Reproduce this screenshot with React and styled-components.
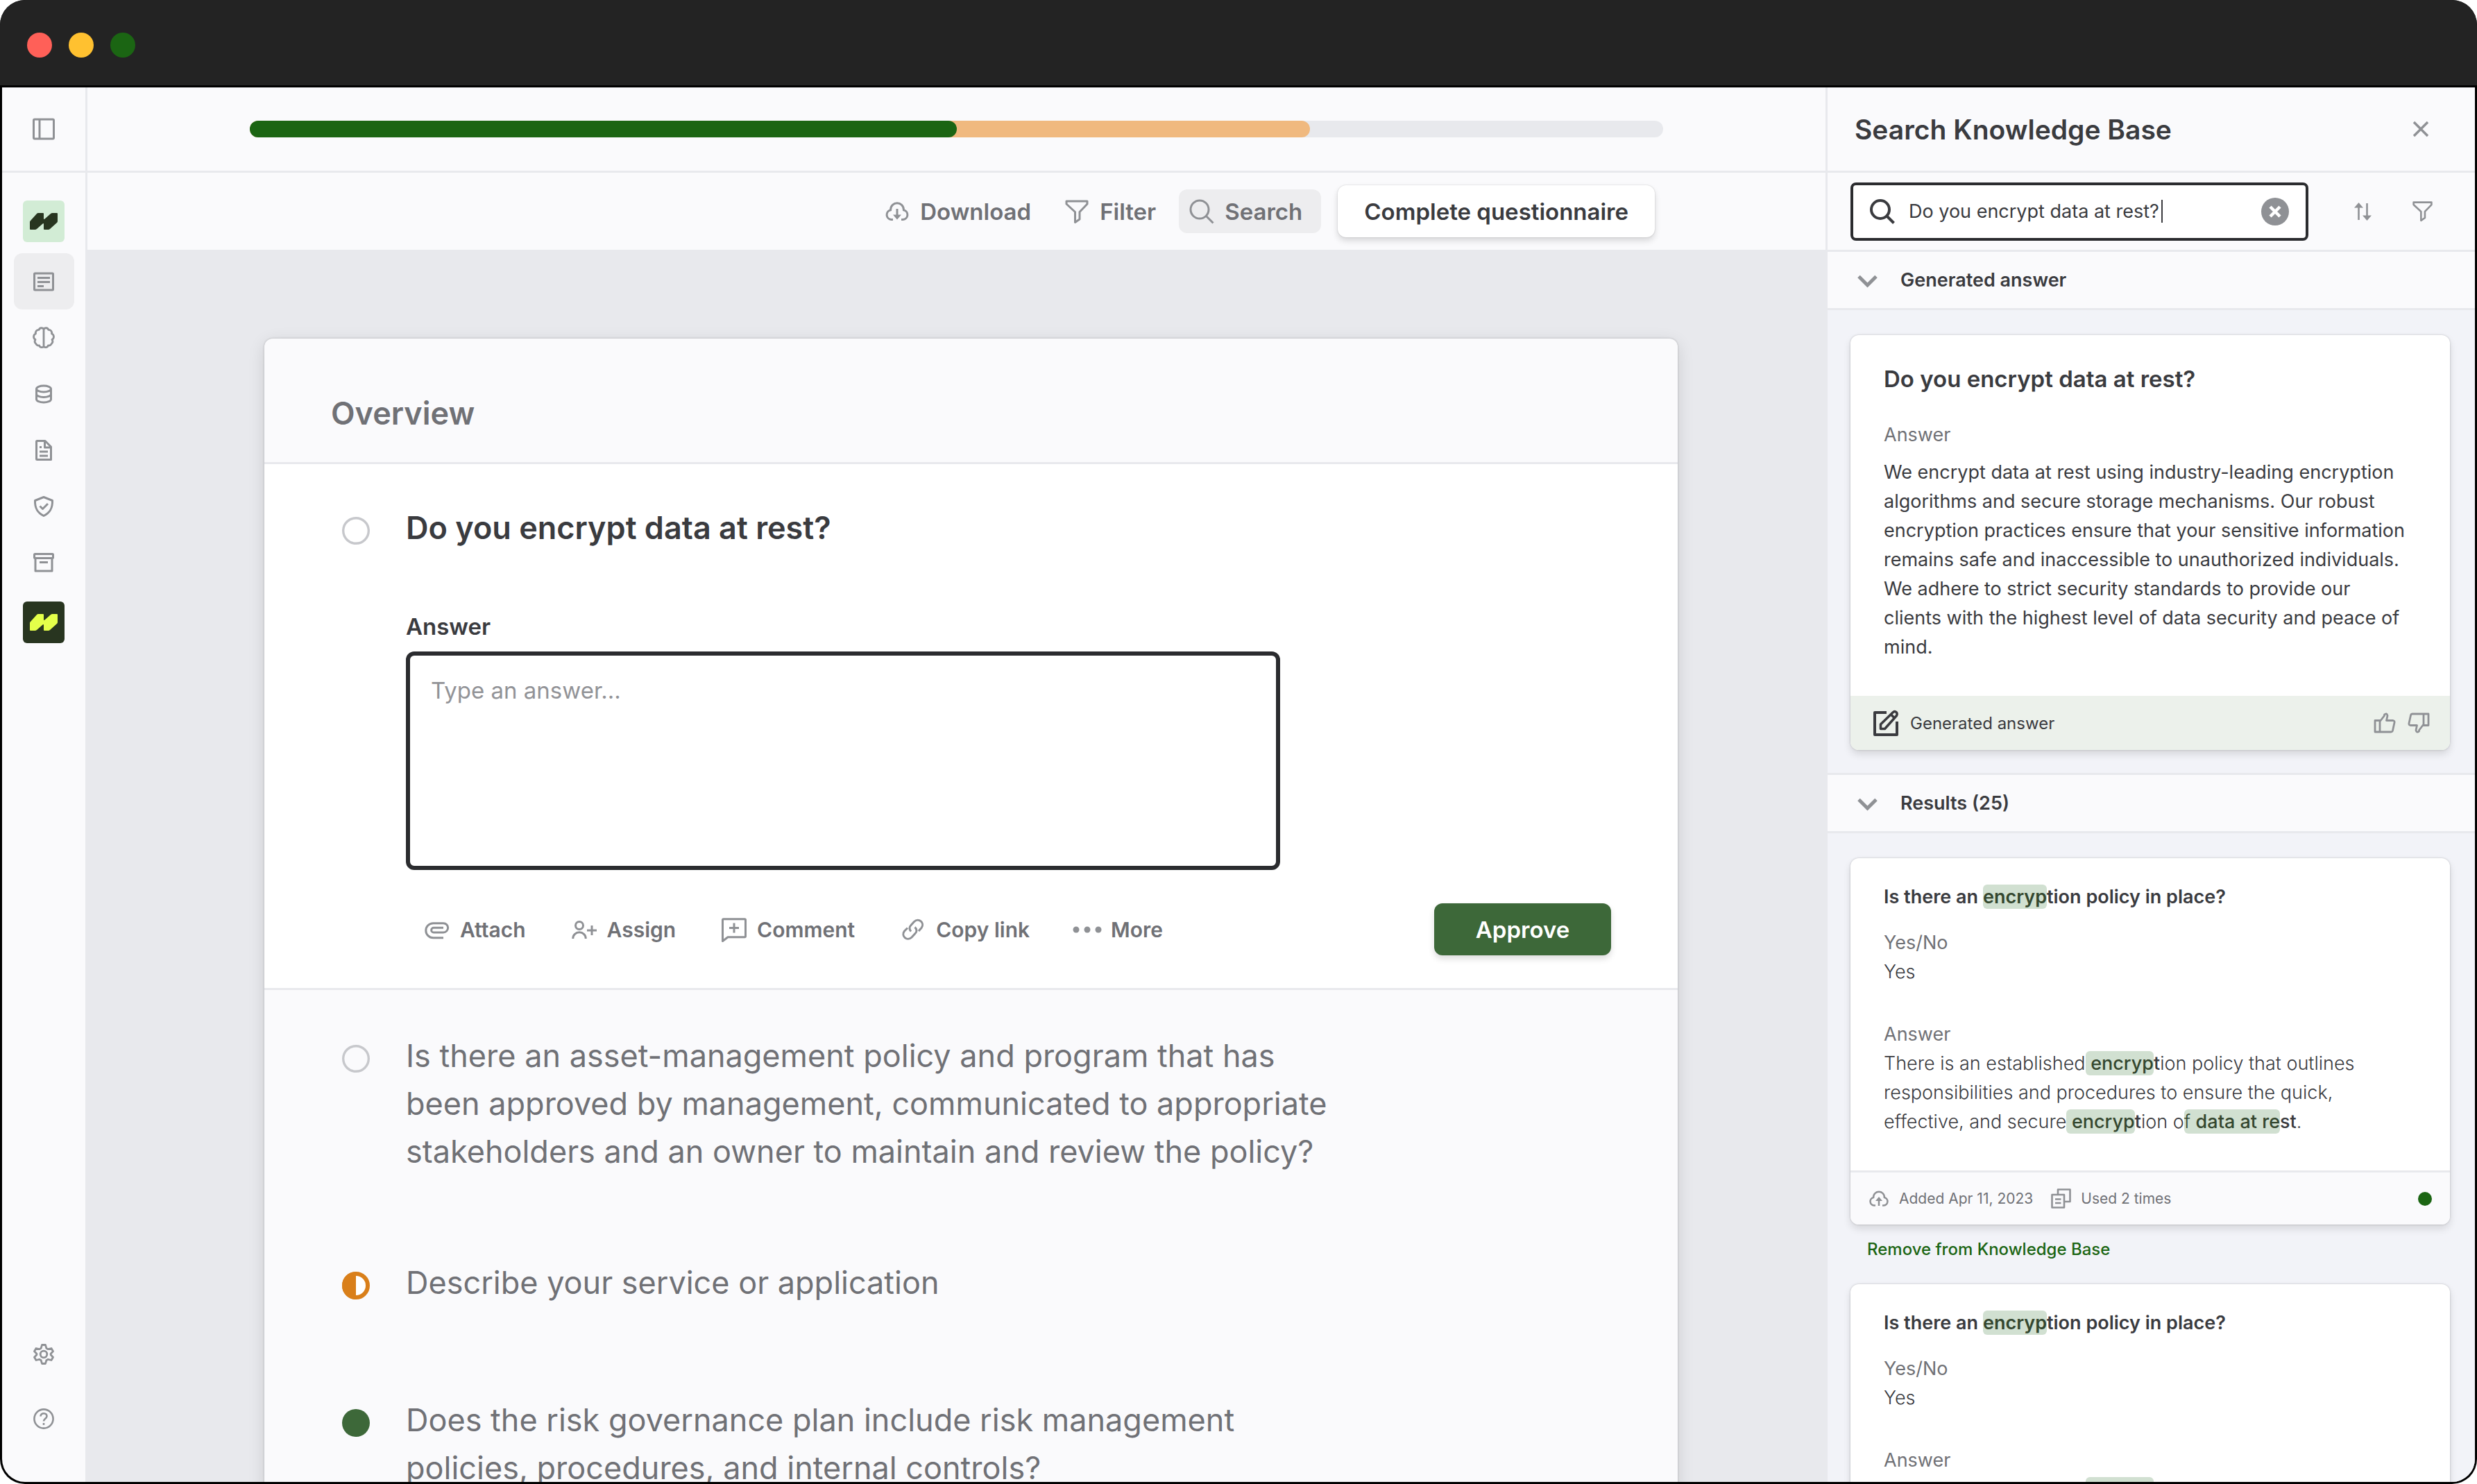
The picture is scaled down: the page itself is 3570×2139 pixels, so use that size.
import React, {useState} from 'react';
import styled, {createGlobalStyle} from 'styled-components';

const GlobalStyle = createGlobalStyle`
  * {
    box-sizing: border-box;
  }

  body {
    margin: 0;
    background: #ffffff;
    color: #3a3b3f;
    font-family: Inter, "Liberation Sans", sans-serif;
  }

  button, input, textarea {
    font-family: inherit;
    color: inherit;
  }

  button {
    border: 0;
    padding: 0;
    background: none;
    cursor: pointer;
  }

  h1, h2, h3, p {
    margin: 0;
  }

  svg {
    display: block;
    flex: none;
  }
`;

const Window = styled.div`
  display: flex;
  flex-direction: column;
  height: 100vh;
  border-radius: 36px;
  overflow: hidden;
  background: #000000;
`;

const TitleBar = styled.header`
  display: flex;
  align-items: center;
  gap: 24px;
  flex: none;
  height: 126px;
  padding: 6px 39px 0;
  border-bottom: 3px solid #000000;
  background: #232323;
`;

const Light = styled.span`
  width: 36px;
  height: 36px;
  border-radius: 50%;
  background: ${(props) => props.$color};
`;

const Body = styled.div`
  display: flex;
  flex: 1;
  min-height: 0;
  margin: 0 3px 3px;
  border-radius: 0 0 33px 33px;
  overflow: hidden;
  background: #fafafc;
`;

const Sidebar = styled.nav`
  display: flex;
  flex-direction: column;
  align-items: center;
  flex: none;
  width: 123px;
  border-right: 3px solid #e8e9ed;
  color: #8f9195;
`;

const SidebarTop = styled.div`
  display: flex;
  align-items: center;
  justify-content: center;
  width: 100%;
  height: 123px;
  margin-bottom: 40px;
  border-bottom: 3px solid #e8e9ed;
`;

const Logo = styled.a`
  width: 60px;
  height: 60px;
  border-radius: 6px;
  color: ${(props) => (props.$dark ? '#e4ff4a' : '#283520')};
  background: ${(props) => (props.$dark ? '#283520' : '#d2ecd5')};
`;

const NavList = styled.div`
  display: flex;
  flex-direction: column;
  margin: 16px 0;
`;

const NavButton = styled.button`
  display: flex;
  align-items: center;
  justify-content: center;
  width: 87px;
  height: 81px;
  border-radius: 12px;
  color: #8f9195;
  background: ${(props) => (props.$active ? '#ededef' : 'transparent')};
`;

const NavFooter = styled.div`
  display: flex;
  flex-direction: column;
  gap: 12px;
  margin-top: auto;
  padding-bottom: 51px;
`;

const Main = styled.main`
  display: flex;
  flex-direction: column;
  flex: 1;
  min-width: 0;
  background: #e8e9ed;
`;

const ProgressRow = styled.div`
  display: flex;
  align-items: center;
  flex: none;
  height: 123px;
  padding: 0 234px;
  border-bottom: 3px solid #e8e9ed;
  background: #fafafc;
`;

const Track = styled.div`
  display: grid;
  width: 100%;
  height: 24px;
  border-radius: 12px;
  background: #e8e9ed;
`;

const Bar = styled.div`
  grid-area: 1 / 1;
  border-radius: 12px;
  background: ${(props) => props.$color};
`;

const Toolbar = styled.div`
  display: flex;
  align-items: center;
  justify-content: flex-end;
  flex: none;
  height: 111px;
  padding: 0 246px;
  background: #fafafc;
`;

const ToolButton = styled.button`
  display: flex;
  align-items: center;
  gap: 15px;
  height: 63px;
  margin-right: ${(props) => (props.$active ? '24px' : '9px')};
  padding: 0 ${(props) => (props.$active ? '27px' : '24px')} 0 15px;
  border-radius: 12px;
  color: #707176;
  background: ${(props) => (props.$active ? '#ededef' : 'transparent')};
  font-size: 33px;
  font-weight: 600;

  svg {
    color: #8f9195;
  }
`;

const CompleteButton = styled.button`
  height: 75px;
  padding: 0 38px;
  border-radius: 12px;
  background: #ffffff;
  box-shadow: 0 0 2px rgba(0, 0, 0, 0.2), 0 5px 10px rgba(0, 0, 0, 0.14);
  font-size: 33px;
  font-weight: 600;
`;

const Canvas = styled.div`
  flex: 1;
  min-height: 0;
  padding: 128px 213px 0 255px;
  overflow: hidden;
`;

const Sheet = styled.section`
  min-height: 100%;
  border-radius: 12px 12px 0 0;
  background: #fafafc;
  box-shadow: 0 0 3px rgba(0, 0, 0, 0.22), 0 6px 24px rgba(0, 0, 0, 0.12);
`;

const SheetTitle = styled.h1`
  padding: 81px 96px 43px;
  border-bottom: 3px solid #e8e9ed;
  color: #707176;
  font-size: 45px;
  font-weight: 600;
  line-height: 54px;
`;

const Current = styled.div`
  display: flex;
  align-items: flex-start;
  gap: 52px;
  padding: 57px 96px 47px 112px;
  border-bottom: 3px solid #e8e9ed;
  background: #ffffff;
`;

const CurrentBody = styled.div`
  flex: 1;
`;

const CurrentTitle = styled.h2`
  font-size: 45px;
  font-weight: 600;
  line-height: 69px;
`;

const Status = styled.svg`
  width: 40px;
  height: 40px;
  margin-top: 19px;
`;

const AnswerLabel = styled.label`
  display: block;
  margin: 87px 0 15px;
  font-size: 33px;
  font-weight: 600;
  line-height: 42px;
`;

const AnswerBox = styled.textarea`
  display: block;
  width: 1260px;
  max-width: 100%;
  height: 315px;
  padding: 26px 30px;
  border: 6px solid #2b2c2f;
  border-radius: 12px;
  outline: 0;
  resize: none;
  background: #ffffff;
  font-size: 33px;
  line-height: 48px;

  &::placeholder {
    color: #929397;
  }
`;

const Actions = styled.div`
  display: flex;
  align-items: center;
  gap: 66px;
  margin-top: 48px;
  padding-left: 27px;
`;

const Action = styled.button`
  display: flex;
  align-items: center;
  gap: 15px;
  color: #707176;
  font-size: 30px;
  font-weight: 600;

  svg {
    color: #8f9195;
    overflow: visible;
  }
`;

const Approve = styled.button`
  width: 255px;
  height: 75px;
  margin-left: auto;
  border-radius: 12px;
  color: #ffffff;
  background: #3d6839;
  box-shadow: 0 5px 10px rgba(0, 0, 0, 0.14);
  font-size: 33px;
  font-weight: 600;
`;

const QuestionList = styled.div`
  display: flex;
  flex-direction: column;
  gap: 120px;
  padding: 60px 96px 0 112px;
`;

const Question = styled.div`
  display: flex;
  align-items: flex-start;
  gap: 52px;
  min-height: 78px;
  color: #707176;

  p {
    max-width: 1350px;
    font-size: 45px;
    line-height: 69px;
  }
`;

const Panel = styled.aside`
  display: flex;
  flex-direction: column;
  flex: none;
  width: 936px;
  border-left: 3px solid #e8e9ed;
  background: #f2f3f8;
`;

const PanelHeader = styled.div`
  display: flex;
  align-items: center;
  justify-content: space-between;
  flex: none;
  height: 123px;
  padding: 0 66px 0 39px;
  border-bottom: 3px solid #e8e9ed;
  background: #fafafc;

  h2 {
    font-size: 39px;
    font-weight: 600;
  }
`;

const IconButton = styled.button`
  color: #8f9195;
`;

const SearchRow = styled.div`
  display: flex;
  align-items: center;
  flex: none;
  gap: 66px;
  height: 114px;
  padding: 0 60px 0 33px;
  border-bottom: 3px solid #e8e9ed;
  background: #fafafc;
`;

const SearchTools = styled.div`
  display: flex;
  align-items: center;
  gap: 57px;
`;

const SearchField = styled.div`
  display: flex;
  align-items: center;
  flex: 1;
  height: 84px;
  padding: 0 24px;
  border: 4px solid #2b2c2f;
  border-radius: 8px;
  background: #ffffff;

  input {
    field-sizing: content;
    margin-left: 20px;
    padding: 0;
    border: 0;
    outline: 0;
    background: none;
    caret-color: transparent;
    font-size: 27px;
  }

  button {
    margin-left: auto;
  }
`;

const Caret = styled.span`
  width: 2px;
  height: 33px;
  margin-left: 3px;
  background: #3a3b3f;
`;

const GroupHeader = styled.button`
  display: flex;
  align-items: center;
  flex: none;
  gap: 31px;
  width: 100%;
  height: ${(props) => (props.$ruled ? '87px' : '84px')};
  padding: 0 42px;
  border-top: ${(props) => (props.$ruled ? '3px' : '0')} solid #e8e9ed;
  border-bottom: 3px solid #e8e9ed;
  background: #fafafc;
  font-size: 27px;
  font-weight: 600;

  svg {
    color: #8f9195;
  }
`;

const Group = styled.div`
  padding: 36px 36px 33px 33px;
`;

const Card = styled.article`
  border-radius: 12px;
  overflow: hidden;
  background: #ffffff;
  box-shadow: 0 0 3px rgba(0, 0, 0, 0.2), 0 6px 12px rgba(0, 0, 0, 0.12);
`;

const CardBody = styled.div`
  padding: ${(props) => (props.$result ? '35px' : '39px')} 57px 49px 48px;
  font-size: 27px;
  line-height: 42px;

  h3 {
    margin-bottom: ${(props) => (props.$result ? '24px' : '36px')};
    font-size: ${(props) => (props.$result ? '27px' : '33px')};
    line-height: ${(props) => (props.$result ? '42px' : '48px')};
    font-weight: 600;
  }
`;

const FieldName = styled.p`
  color: #707176;
`;

const GeneratedText = styled.p`
  margin-top: 12px;
`;

const FieldText = styled.p`
  font-weight: 300;

  & + ${FieldName} {
    margin-top: 48px;
  }

  b {
    font-weight: 500;
  }
`;

const Mark = styled.mark`
  padding: 1px 0;
  border-radius: 6px;
  color: #34472f;
  background: #d1e0d1;
`;

const CardFooter = styled.div`
  display: flex;
  align-items: center;
  gap: 14px;
  height: 78px;
  padding: 0 26px;
  border-top: ${(props) => (props.$generated ? '0' : '3px')} solid #e8e9ed;
  background: ${(props) => (props.$generated ? '#ecf1eb' : '#fafafc')};
  color: ${(props) => (props.$generated ? '#3a3b3f' : '#707176')};
  font-size: ${(props) => (props.$generated ? '24px' : '21px')};
`;

const Source = styled.span`
  display: flex;
  align-items: center;
  gap: 15px;
  padding-left: 6px;
`;

const Votes = styled.div`
  display: flex;
  gap: 17px;
  margin-left: auto;
  padding-right: 3px;
`;

const Meta = styled.span`
  display: flex;
  align-items: center;
  gap: 14px;
  margin-right: 12px;

  svg {
    color: #8f9195;
  }
`;

const Dot = styled.span`
  width: 20px;
  height: 20px;
  margin-left: auto;
  border-radius: 50%;
  background: #1b6513;
`;

const RemoveLink = styled.a`
  display: block;
  margin: 18px 24px 32px;
  color: #1b6513;
  font-size: 24px;
  font-weight: 500;
  line-height: 36px;
  text-decoration: none;
`;

const Icon = ({w = 36, h = 36, sw = 3, children}) => (
    <svg width={w} height={h} viewBox={`0 0 ${w} ${h}`} fill="none" stroke="currentColor"
         strokeWidth={sw} strokeLinejoin="round" aria-hidden="true">
        {children}
    </svg>
);

const LogoMark = () => (
    <svg width="60" height="60" viewBox="0 0 60 60" fill="currentColor" aria-hidden="true">
        <path d="M22 18h7q1 0 1 1v7q0 1.500 1.500 .500L40 19q1.200-1 2.500-1H49q1 0 1 1v11q0 1-1 2l-10 9q-1 1-2.500 1H31q-1 0-1-1v-7q0-1.500-1.500-.500L20 41q-1.200 1-2.500 1H11q-1 0-1-1V31q0-1.200 1-2l9-10q1-1 2-1z"/>
    </svg>
);

const PanelIcon = () => (
    <Icon><rect x="3.500" y="4" width="29" height="28" rx="1.5"/><path d="M12 4v28"/></Icon>
);

const FormIcon = () => (
    <Icon>
        <rect x="4.500" y="6" width="27" height="24" rx="1"/>
        <path d="M9 12.500h18M9 18.500h18M9 24.500h9"/>
    </Icon>
);

const BrainIcon = () => (
    <Icon sw={2.8}>
        <path d="M18 5v26M18 5.500a3.800 3.800 0 0 0-6.800.800 4.500 4.500 0 0 0-4.700 5.700 4.700 4.700 0 0 0-.500 8.500 4.700 4.700 0 0 0 .800 6 4.500 4.500 0 0 0 4.700 2.500 3.800 3.800 0 0 0 6.500 1.300"/>
        <path d="M18 5.500a3.800 3.800 0 0 1 6.800.800 4.500 4.500 0 0 1 4.700 5.700 4.700 4.700 0 0 1 .500 8.500 4.700 4.700 0 0 1-.800 6 4.500 4.500 0 0 1-4.700 2.500 3.800 3.800 0 0 1-6.500 1.300"/>
    </Icon>
);

const DatabaseIcon = () => (
    <Icon>
        <ellipse cx="18" cy="10.500" rx="10.500" ry="4.500"/>
        <path d="M7.500 10.500v15c0 2.500 4.700 4.500 10.500 4.500s10.500-2 10.500-4.500v-15M7.500 18c0 2.500 4.700 4.500 10.500 4.500s10.500-2 10.500-4.500"/>
    </Icon>
);

const FileIcon = () => (
    <Icon>
        <path d="M8.500 4.500h11.500l8.500 8.500v18.500h-20q-1 0-1-1v-25q0-1 1-1zM19.500 4.500v9.500h9M12 13.500h3M12 20h12M12 26h12"/>
    </Icon>
);

const ShieldIcon = () => (
    <Icon>
        <path d="M18 4.500l12.500 5c.400 10-2.500 17-12.500 22C8 26.500 5.100 19.500 5.500 9.500z"/>
        <path d="M12.500 17.500l4 4 7.500-7.500"/>
    </Icon>
);

const ArchiveIcon = () => (
    <Icon>
        <rect x="4.500" y="5.500" width="27" height="6" rx="1"/>
        <path d="M6 11.500V30h24V11.500M12 17.500h12"/>
    </Icon>
);

const GearIcon = () => (
    <Icon sw={2.8}>
        <circle cx="18" cy="18" r="4.800"/>
        <path d="M15.500 4.500h5l1.300 4.700 2.500 1.500 4.700-1.200 2.500 4.300-3.400 3.500v1.400l3.400 3.500-2.500 4.300-4.700-1.200-2.500 1.500-1.300 4.700h-5l-1.300-4.700-2.500-1.500L7 26.500l-2.500-4.300 3.400-3.500v-1.400l-3.400-3.500L7 9.500l4.700 1.200 2.500-1.500z"/>
    </Icon>
);

const HelpIcon = () => (
    <Icon sw={2.6}>
        <circle cx="18" cy="18" r="13.600"/>
        <path d="M13.500 14.500c0-6 9.500-5.500 9 0-.200 3.200-4.500 3.500-4.500 7M18 24v3"/>
    </Icon>
);

const CloudIcon = ({up, size = 36}) => (
    <svg width={size} height={size} viewBox="0 0 36 36" fill="none" stroke="currentColor"
         strokeWidth="3" aria-hidden="true">
        <path d="M12 29.500H9.500a7 7 0 0 1-1-13.800C8.500 2.500 27.500 2.500 27.500 15.700a7 7 0 0 1-1 13.800H24"/>
        <path d={up ? 'M18 30V18' : 'M18 14v12'}/>
        <path d={up ? 'M12 21.500h12l-6-7z' : 'M12 22.500h12l-6 7z'} fill="currentColor" stroke="none"/>
    </svg>
);

const FilterIcon = ({size = 36}) => (
    <svg width={size} height={size} viewBox="0 0 36 36" fill="none" stroke="currentColor"
         strokeWidth="3" strokeLinejoin="round" aria-hidden="true">
        <path d="M3 3h30v4L22 18.500v10.500l-6.500 4.500v-15L3 7z"/>
    </svg>
);

const SearchIcon = ({sw = 3}) => (
    <Icon sw={sw}><circle cx="15" cy="15" r="13"/><path d="M24.500 24.500l10 10"/></Icon>
);

const ClipIcon = () => (
    <Icon>
        <path d="M27 29.700H12.300a10.500 10.500 0 0 1 0-21H27a6.650 6.650 0 0 1 0 13.300H13a3.350 3.350 0 0 1 0-6.700h14"/>
    </Icon>
);

const AssignIcon = () => (
    <Icon>
        <circle cx="11" cy="12" r="5.500"/>
        <path d="M1.800 31v-.500a9.200 8.700 0 0 1 18.400 0v.500M29 12v14M22 19h14"/>
    </Icon>
);

const CommentIcon = () => (
    <Icon><path d="M1.500 34.500V4q0-1.200 1.200-1.200h30.600q1.200 0 1.200 1.200v23.500q0 1.200-1.200 1.200H9zM18 8.500v14M11 15.500h14"/></Icon>
);

const LinkIcon = () => (
    <Icon>
        <path d="M15 20.500c-3-3-2.500-6.500 0-9l4.500-5c6.500-6.500 16 2 10.500 9l-4 4.500"/>
        <path d="M20.500 14.500c3.500 3 3 6.500.500 9l-5 5.500c-6.500 6.500-16-2-10.500-9l4.500-4.500"/>
    </Icon>
);

const MoreIcon = () => (
    <svg width="36" height="36" viewBox="0 0 36 36" fill="currentColor" aria-hidden="true">
        <circle cx="1" cy="18" r="4.500"/><circle cx="17" cy="18" r="4.500"/><circle cx="33" cy="18" r="4.500"/>
    </svg>
);

const CloseIcon = () => (
    <Icon w={24} h={24} sw={3.5}><path d="M2 2l20 20M22 2L2 22"/></Icon>
);

const ClearIcon = () => (
    <svg width="40" height="40" viewBox="0 0 40 40" aria-hidden="true">
        <circle cx="20" cy="20" r="20" fill="#8f9195"/>
        <path d="M13 13l14 14M27 13L13 27" stroke="#ffffff" strokeWidth="4.500"/>
    </svg>
);

const SortIcon = () => (
    <Icon w={26} h={26} sw={2.6}>
        <path d="M6.500 25V4M18.500 1v21"/>
        <path d="M0 7.500h13L6.500 0zM12 18.500h13L18.500 26z" fill="currentColor" stroke="none"/>
    </Icon>
);

const ChevronIcon = () => (
    <svg width="32" height="24" viewBox="0 0 32 24" fill="none" stroke="currentColor"
         strokeWidth="5" aria-hidden="true">
        <path d="M3 6.500L15.500 19 28 6.500"/>
    </svg>
);

const EditIcon = () => (
    <Icon w={39} h={39} sw={4}>
        <path d="M20 4H3v32h32V17" strokeLinejoin="round"/>
        <path d="M11.500 27.500v-6.500L29.500 3.500q2.500-2 4.500 0t.500 5L17.500 27.500zM26.500 7l5.500 5.500" strokeWidth="3.500"/>
    </Icon>
);

const ThumbIcon = ({down}) => (
    <Icon w={32} h={30} sw={2.8}>
        <g transform={down ? 'rotate(180 16 15)' : undefined}>
            <path d="M2 11.500h7V28H2zM9 13l6.500-8.500V3q3.500-3 4.500 1.500L18.500 11.500H28q2.500.500 2 3L27.500 26q-.500 2-2.500 2H9z"/>
        </g>
    </Icon>
);

const CopiesIcon = () => (
    <Icon w={29} h={29} sw={2.6}>
        <path d="M10 8V1.500h17.500v17.500H20"/>
        <path d="M1.500 9H19v18.500H1.500zM6 15.500h8.500M6 21h8.500"/>
    </Icon>
);

const StatusIcon = ({status}) => (
    <Status viewBox="0 0 40 40" aria-hidden="true">
        {status === 'open' && <circle cx="20" cy="20" r="18.300" fill="none" stroke="#c7c8cc" strokeWidth="3.400"/>}
        {status === 'partial' && (
            <>
                <circle cx="20" cy="20" r="17" fill="#ffffff" stroke="#d97f1a" strokeWidth="6"/>
                <path d="M20 0a20 20 0 0 0 0 40z" fill="#d97f1a"/>
            </>
        )}
        {status === 'done' && <circle cx="20" cy="20" r="20" fill="#3d6839"/>}
    </Status>
);

const navItems = [
    {name: 'Questionnaires', icon: <FormIcon/>, active: true},
    {name: 'Knowledge', icon: <BrainIcon/>},
    {name: 'Data', icon: <DatabaseIcon/>},
    {name: 'Documents', icon: <FileIcon/>},
    {name: 'Security', icon: <ShieldIcon/>},
    {name: 'Archive', icon: <ArchiveIcon/>},
];

const actions = [
    {name: 'Attach', icon: <ClipIcon/>},
    {name: 'Assign', icon: <AssignIcon/>},
    {name: 'Comment', icon: <CommentIcon/>},
    {name: 'Copy link', icon: <LinkIcon/>},
    {name: 'More', icon: <MoreIcon/>},
];

const questions = [
    {
        status: 'open',
        text: 'Is there an asset-management policy and program that has been approved by management, communicated to appropriate stakeholders and an owner to maintain and review the policy?',
    },
    {status: 'partial', text: 'Describe your service or application'},
    {
        status: 'done',
        text: 'Does the risk governance plan include risk management policies, procedures, and internal controls?',
    },
];

const ResultCard = () => (
    <>
        <Card>
            <CardBody $result>
                <h3>Is there an <Mark>encryp</Mark>tion policy in place?</h3>
                <FieldName>Yes/No</FieldName>
                <FieldText>Yes</FieldText>
                <FieldName>Answer</FieldName>
                <FieldText>
                    There is an established<Mark> <b>encryp</b></Mark><b>t</b>ion policy that outlines
                    responsibilities and procedures to ensure the quick, effective, and
                    secure<Mark> <b>encryp</b></Mark><b>t</b>ion o<Mark>f <b>data at re</b></Mark><b>st</b>.
                </FieldText>
            </CardBody>
            <CardFooter>
                <Meta><CloudIcon up size={30}/>Added Apr 11, 2023</Meta>
                <Meta><CopiesIcon/>Used 2 times</Meta>
                <Dot/>
            </CardFooter>
        </Card>
        <RemoveLink href="#remove">Remove from Knowledge Base</RemoveLink>
    </>
);

const App = () => {
    const [query, setQuery] = useState('Do you encrypt data at rest?');
    const [answer, setAnswer] = useState('');

    return (
        <>
            <GlobalStyle/>
            <Window>
                <TitleBar>
                    <Light $color="#ff6058"/>
                    <Light $color="#ffc130"/>
                    <Light $color="#1b6513"/>
                </TitleBar>
                <Body>
                    <Sidebar>
                        <SidebarTop>
                            <IconButton aria-label="Toggle sidebar"><PanelIcon/></IconButton>
                        </SidebarTop>
                        <Logo href="#home" aria-label="Home"><LogoMark/></Logo>
                        <NavList>
                            {navItems.map((item) => (
                                <NavButton key={item.name} aria-label={item.name} $active={item.active}>
                                    {item.icon}
                                </NavButton>
                            ))}
                        </NavList>
                        <Logo href="#workspace" aria-label="Workspace" $dark><LogoMark/></Logo>
                        <NavFooter>
                            <NavButton aria-label="Settings"><GearIcon/></NavButton>
                            <NavButton aria-label="Help"><HelpIcon/></NavButton>
                        </NavFooter>
                    </Sidebar>

                    <Main>
                        <ProgressRow>
                            <Track>
                                <Bar $color="#f0b97f" style={{width: '75%'}}/>
                                <Bar $color="#1b6513" style={{width: '50%'}}/>
                            </Track>
                        </ProgressRow>
                        <Toolbar>
                            <ToolButton><CloudIcon/>Download</ToolButton>
                            <ToolButton><FilterIcon/>Filter</ToolButton>
                            <ToolButton $active><SearchIcon/>Search</ToolButton>
                            <CompleteButton>Complete questionnaire</CompleteButton>
                        </Toolbar>
                        <Canvas>
                            <Sheet>
                                <SheetTitle>Overview</SheetTitle>
                                <Current>
                                    <StatusIcon status="open"/>
                                    <CurrentBody>
                                        <CurrentTitle>Do you encrypt data at rest?</CurrentTitle>
                                        <AnswerLabel htmlFor="answer">Answer</AnswerLabel>
                                        <AnswerBox
                                            id="answer"
                                            placeholder="Type an answer..."
                                            value={answer}
                                            onChange={(e) => setAnswer(e.target.value)}/>
                                        <Actions>
                                            {actions.map((action) => (
                                                <Action key={action.name}>{action.icon}{action.name}</Action>
                                            ))}
                                            <Approve>Approve</Approve>
                                        </Actions>
                                    </CurrentBody>
                                </Current>
                                <QuestionList>
                                    {questions.map((question) => (
                                        <Question key={question.text}>
                                            <StatusIcon status={question.status}/>
                                            <p>{question.text}</p>
                                        </Question>
                                    ))}
                                </QuestionList>
                            </Sheet>
                        </Canvas>
                    </Main>

                    <Panel>
                        <PanelHeader>
                            <h2>Search Knowledge Base</h2>
                            <IconButton aria-label="Close"><CloseIcon/></IconButton>
                        </PanelHeader>
                        <SearchRow>
                            <SearchField>
                                <SearchIcon sw={4}/>
                                <input
                                    aria-label="Search Knowledge Base"
                                    value={query}
                                    onChange={(e) => setQuery(e.target.value)}/>
                                <Caret/>
                                <button aria-label="Clear" onClick={() => setQuery('')}><ClearIcon/></button>
                            </SearchField>
                            <SearchTools>
                                <IconButton aria-label="Sort"><SortIcon/></IconButton>
                                <IconButton aria-label="Filter results"><FilterIcon size={31}/></IconButton>
                            </SearchTools>
                        </SearchRow>
                        <GroupHeader><ChevronIcon/>Generated answer</GroupHeader>
                        <Group>
                            <Card>
                                <CardBody>
                                    <h3>Do you encrypt data at rest?</h3>
                                    <FieldName>Answer</FieldName>
                                    <GeneratedText>
                                        We encrypt data at rest using industry-leading encryption algorithms
                                        and secure storage mechanisms. Our robust encryption practices ensure
                                        that your sensitive information remains safe and inaccessible to
                                        unauthorized individuals. We adhere to strict security standards to
                                        provide our clients with the highest level of data security and peace
                                        of mind.
                                    </GeneratedText>
                                </CardBody>
                                <CardFooter $generated>
                                    <Source><EditIcon/>Generated answer</Source>
                                    <Votes>
                                        <IconButton aria-label="Good answer"><ThumbIcon/></IconButton>
                                        <IconButton aria-label="Bad answer"><ThumbIcon down/></IconButton>
                                    </Votes>
                                </CardFooter>
                            </Card>
                        </Group>
                        <GroupHeader $ruled><ChevronIcon/>Results (25)</GroupHeader>
                        <Group>
                            <ResultCard/>
                            <ResultCard/>
                        </Group>
                    </Panel>
                </Body>
            </Window>
        </>
    );
};

export default App;
